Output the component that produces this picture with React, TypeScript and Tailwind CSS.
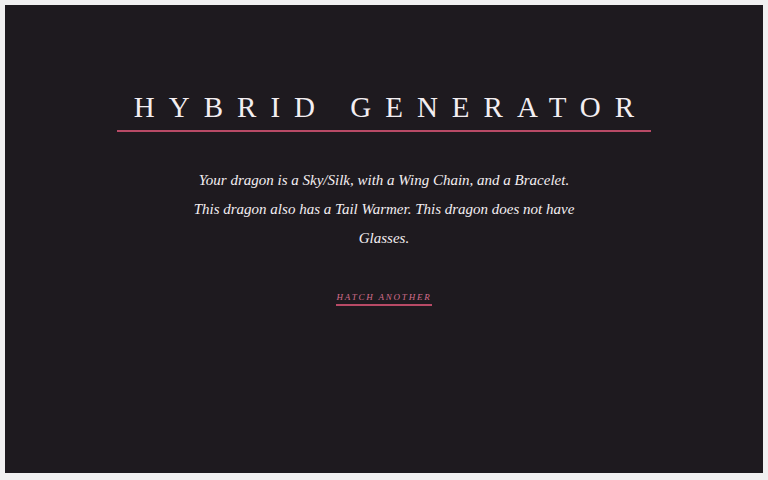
export default function App() {
  return (
    <div className="min-h-[480px] w-full bg-[#f1f0f1] px-[5px] pt-[5px] pb-[7px]">
      <div className="flex h-[468px] flex-col items-center bg-[#1e1a1f] font-['Liberation_Serif',serif]">
        <h1 className="mt-[82px] w-[534px] whitespace-nowrap border-b-2 border-[#b84a66] pb-[3px] pl-[14px] text-center text-[29px] leading-[40px] tracking-[14px] text-[#f3eef1]">
          HYBRID GENERATOR
        </h1>

        <p className="mt-[34px] w-[385px] text-center text-[15px] leading-[29px] italic text-[#f3eef1]">
          Your dragon is a Sky/Silk, with a Wing Chain, and a Bracelet. This dragon also has a Tail Warmer. This dragon does not have Glasses.
        </p>

        <a
          href="#"
          className="mt-[38px] border-b-2 border-[#b84a66] pb-[1px] text-[9px] leading-[12px] italic tracking-[1.8px] text-[#d36e8c]"
        >
          HATCH ANOTHER
        </a>
      </div>
    </div>
  );
}
